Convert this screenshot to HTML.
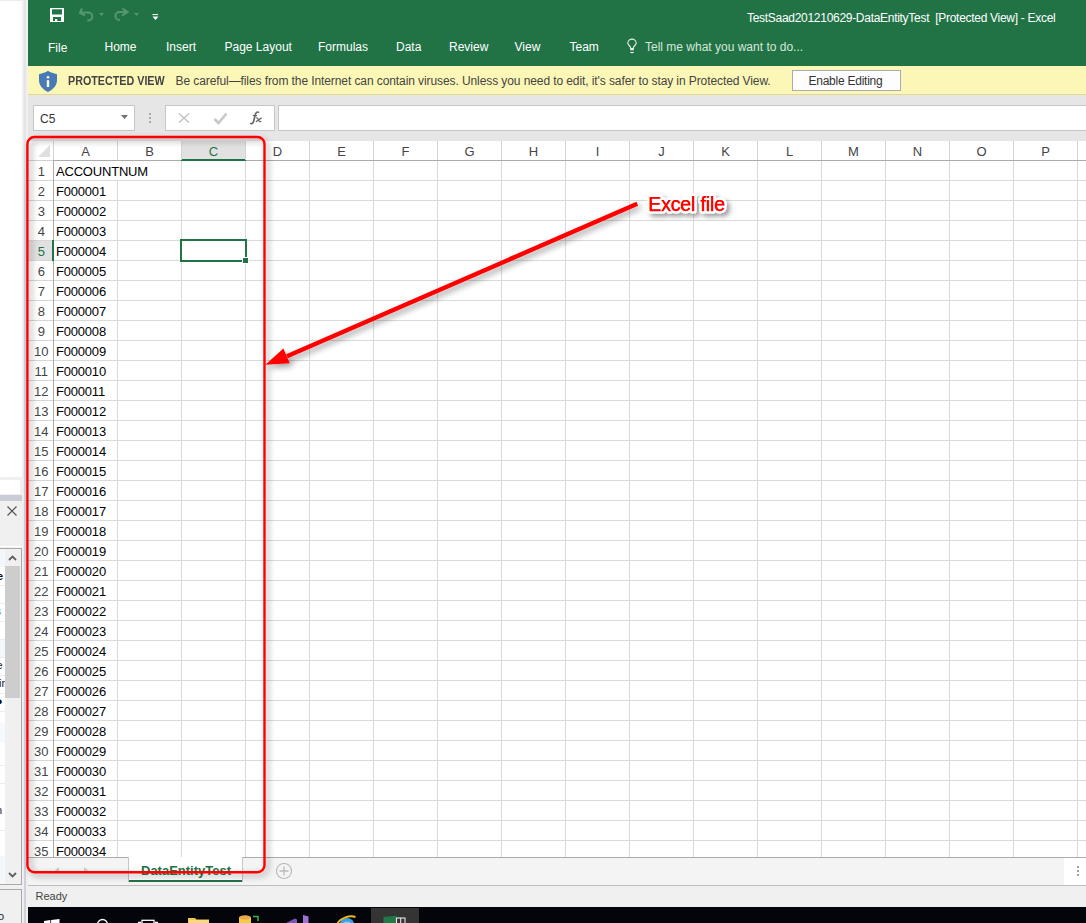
<!DOCTYPE html><html><head><meta charset="utf-8"><style>
*{margin:0;padding:0;box-sizing:border-box}
html,body{width:1086px;height:923px;overflow:hidden;background:#fff;font-family:"Liberation Sans",sans-serif;position:relative}
.ab{position:absolute}
.t{position:absolute;white-space:pre;line-height:1}
</style></head><body>
<div class="ab" style="left:0;top:0;width:22px;height:477px;background:#fff"></div>
<div class="ab" style="left:0;top:0;width:22px;height:1px;background:#ececec"></div>
<div class="ab" style="left:0;top:477px;width:22px;height:446px;background:#f0f0f0"></div>
<div class="ab" style="left:0;top:480px;width:20px;height:14px;background:#fff"></div>
<div class="ab" style="left:0;top:495px;width:22px;height:6px;background:#c9cbd7"></div>
<svg class="ab" style="left:6.5px;top:506px" width="10" height="10"><path d="M0.5 0.5l9 9M9.5 0.5l-9 9" stroke="#555" stroke-width="1.2"/></svg>
<div class="ab" style="left:0;top:546px;width:22px;height:1px;background:#fff"></div>
<div class="ab" style="left:0;top:548px;width:22px;height:337px;background:#fff;border:1px solid #a9a9a9;border-left:none"></div>
<div class="ab" style="left:0;top:549px;width:5px;height:18px;background:#f3f7fc"></div>
<div class="ab" style="left:0;top:639px;width:5px;height:18px;background:#f3f7fc"></div>
<div class="ab" style="left:0;top:723px;width:5px;height:20px;background:#f5f8fc"></div>
<div class="ab" style="left:0;top:856px;width:5px;height:28px;background:#f3f7fc"></div>
<div class="ab" style="left:0;top:585px;width:5px;height:1px;background:#e8ecf2"></div>
<div class="ab" style="left:0;top:603px;width:5px;height:1px;background:#e8ecf2"></div>
<div class="ab" style="left:0;top:621px;width:5px;height:1px;background:#e8ecf2"></div>
<div class="ab" style="left:0;top:639px;width:5px;height:1px;background:#e8ecf2"></div>
<div class="ab" style="left:0;top:657px;width:5px;height:1px;background:#e8ecf2"></div>
<div class="ab" style="left:0;top:675px;width:5px;height:1px;background:#e8ecf2"></div>
<div class="ab" style="left:0;top:693px;width:5px;height:1px;background:#e8ecf2"></div>
<div class="ab" style="left:0;top:711px;width:5px;height:1px;background:#e8ecf2"></div>
<div class="ab" style="left:0;top:765px;width:5px;height:1px;background:#e8ecf2"></div>
<div class="ab" style="left:0;top:783px;width:5px;height:1px;background:#e8ecf2"></div>
<div class="ab" style="left:0;top:830px;width:5px;height:1px;background:#e8ecf2"></div>
<div class="ab" style="left:5px;top:549px;width:16px;height:335px;background:#f0f0f0"></div>
<div class="ab" style="left:5px;top:566px;width:15px;height:132px;background:#cdcdcd"></div>
<svg class="ab" style="left:8px;top:555px" width="9" height="6"><path d="M1 5l3.5-3.5L8 5" fill="none" stroke="#606060" stroke-width="1.8"/></svg>
<svg class="ab" style="left:8px;top:872px" width="9" height="6"><path d="M1 1l3.5 3.5L8 1" fill="none" stroke="#606060" stroke-width="1.8"/></svg>
<div class="ab" style="left:0;top:549px;width:5px;height:335px;overflow:hidden"><div class="t" style="left:-3px;top:21.5px;font-size:11px;font-weight:700;color:#111">e</div><div class="t" style="left:-4.5px;top:57px;font-size:11px;color:#1e88d8">s</div><div class="t" style="left:-3.5px;top:111px;font-size:11px;color:#222">e</div><div class="t" style="left:-1px;top:128.5px;font-size:11px;color:#222">ir</div><div class="t" style="left:-4px;top:147px;font-size:11px;color:#000">●</div><div class="t" style="left:-4px;top:256px;font-size:11px;color:#222">n</div></div>
<div class="ab" style="left:0;top:889px;width:22px;height:34px;background:#f0f0f0;border-top:1px solid #a9a9a9;border-right:1px solid #a9a9a9"></div>
<div class="ab" style="left:0;top:890px;width:5px;height:33px;overflow:hidden"><div class="t" style="left:-2px;top:20.5px;font-size:11px;color:#223">o</div></div>
<div class="ab" style="left:22px;top:0;width:6px;height:923px;background:#efeff0"></div>
<div class="ab" style="left:24px;top:0;width:2px;height:923px;background:linear-gradient(#e4e5ea 0,#e4e5ea 140px,#cdd3de 200px,#cdd3de 100%)"></div>
<div class="ab" style="left:28px;top:0;width:1058px;height:66px;background:#217346"></div>
<svg class="ab" style="left:50px;top:8px" width="14" height="14" viewBox="0 0 14 14">
<rect x="0" y="0" width="14" height="14" rx="0.5" fill="#fff"/>
<rect x="2" y="1.3" width="10" height="5.2" fill="#217346"/>
<rect x="3" y="9" width="8" height="4" fill="#217346"/>
<rect x="5" y="11" width="2.2" height="2" fill="#fff"/>
</svg>
<svg class="ab" style="left:75px;top:4px" width="20" height="20" viewBox="0 0 20 20">
<path d="M7 4.5L5 9L10 11.3" fill="none" stroke="#569670" stroke-width="2"/>
<path d="M6 8.5H13.3A4 4 0 0 1 13.3 16.5H12.3" fill="none" stroke="#569670" stroke-width="2"/>
</svg>
<svg class="ab" style="left:99px;top:13px" width="5" height="3"><path d="M0 0h5l-2.5 3z" fill="#569670"/></svg>
<svg class="ab" style="left:108px;top:4px" width="22" height="20" viewBox="0 0 22 20">
<path d="M14.4 4.5L19.6 8L13.9 11.7" fill="none" stroke="#569670" stroke-width="2"/>
<path d="M19 8H11.4A4 4 0 0 0 11.4 16H12" fill="none" stroke="#569670" stroke-width="2"/>
</svg>
<svg class="ab" style="left:134px;top:13px" width="5" height="3"><path d="M0 0h5l-2.5 3z" fill="#569670"/></svg>
<svg class="ab" style="left:152px;top:13px" width="7" height="8"><rect x="0.5" y="1" width="5.5" height="1.1" fill="#fff"/><path d="M0.5 3.5h6l-3 3.5z" fill="#fff"/></svg>
<div class="t" style="left:747px;top:12px;font-size:12px;color:#fff;letter-spacing:-0.29px">TestSaad201210629-DataEntityTest  [Protected View] - Excel</div>
<div class="t" style="left:48px;top:42px;font-size:12px;color:#fff">File</div>
<div class="t" style="left:104.5px;top:41px;font-size:12px;color:#fff">Home</div>
<div class="t" style="left:166px;top:41px;font-size:12px;color:#fff">Insert</div>
<div class="t" style="left:224.5px;top:41px;font-size:12px;color:#fff">Page Layout</div>
<div class="t" style="left:318px;top:41px;font-size:12px;color:#fff">Formulas</div>
<div class="t" style="left:396px;top:41px;font-size:12px;color:#fff">Data</div>
<div class="t" style="left:449px;top:41px;font-size:12px;color:#fff">Review</div>
<div class="t" style="left:514.5px;top:41px;font-size:12px;color:#fff">View</div>
<div class="t" style="left:569.5px;top:41px;font-size:12px;color:#fff">Team</div>
<svg class="ab" style="left:626px;top:38px" width="12" height="16" viewBox="0 0 12 16">
<path d="M4.6 10.5V9.6C4.6 8.3 1.8 7 1.8 5.3A4.2 4.2 0 0 1 10.2 5.3C10.2 7 7.4 8.3 7.4 9.6V10.5z" fill="none" stroke="#e6efe8" stroke-width="1.1"/>
<rect x="4.2" y="11" width="3.6" height="1.3" fill="#e6efe8"/>
<path d="M4.2 14.5h3.6" stroke="#e6efe8" stroke-width="1.1"/>
</svg>
<div class="t" style="left:645px;top:41px;font-size:12px;color:#d6e6db">Tell me what you want to do...</div>
<div class="ab" style="left:28px;top:66px;width:1058px;height:29px;background:#fcf7b6"></div>
<div class="ab" style="left:28px;top:94px;width:1058px;height:1px;background:#e0d98e"></div>
<svg class="ab" style="left:38px;top:70px" width="20" height="23" viewBox="0 0 20 23">
<path d="M10 0.8C7.5 2.5 4.5 3.5 1 4.2v6C1 15.5 5 19.5 10 22 15 19.5 19 15.5 19 10.2V4.2C15.5 3.5 12.5 2.5 10 0.8z" fill="#4a7ab4"/>
<rect x="8.8" y="6.2" width="2.4" height="2.2" fill="#fff"/><rect x="8.8" y="10.2" width="2.4" height="6.8" fill="#fff"/>
</svg>
<div class="t" style="left:68px;top:74.6px;font-size:12px;color:#444;font-weight:700;transform:scaleX(0.895);transform-origin:0 0">PROTECTED VIEW</div>
<div class="t" style="left:175.5px;top:74.6px;font-size:12px;color:#444;letter-spacing:-0.09px">Be careful—files from the Internet can contain viruses. Unless you need to edit, it's safer to stay in Protected View.</div>
<div class="ab" style="left:792px;top:70px;width:109px;height:21px;background:#fdfdfd;border:1px solid #ababab"></div>
<div class="t" style="left:808.5px;top:74.6px;font-size:12px;color:#333;letter-spacing:-0.25px">Enable Editing</div>
<div class="ab" style="left:28px;top:95px;width:1058px;height:46px;background:#e6e6e6"></div>
<div class="ab" style="left:33px;top:105px;width:102px;height:26px;background:#fff;border:1px solid #c6c6c6"></div>
<div class="t" style="left:40px;top:112.6px;font-size:12px;color:#333">C5</div>
<svg class="ab" style="left:121px;top:115px" width="7" height="4"><path d="M0 0h7l-3.5 4z" fill="#707070"/></svg>
<div class="ab" style="left:149px;top:113px;width:2px;height:2px;background:#aaa"></div>
<div class="ab" style="left:149px;top:117px;width:2px;height:2px;background:#aaa"></div>
<div class="ab" style="left:149px;top:121px;width:2px;height:2px;background:#aaa"></div>
<div class="ab" style="left:165px;top:105px;width:110px;height:26px;background:#fff;border:1px solid #c6c6c6"></div>
<svg class="ab" style="left:178px;top:113px" width="12" height="10"><path d="M1 0.5l10 9M11 0.5l-10 9" stroke="#c4c4c4" stroke-width="1.5"/></svg>
<svg class="ab" style="left:213px;top:112px" width="15" height="13"><path d="M1.5 7l4 4L13.5 1.5" fill="none" stroke="#c8c8c8" stroke-width="2.6"/></svg>
<svg class="ab" style="left:248px;top:110px" width="16" height="16"><path d="M2.2 13.2C3.5 14.3 5 13.5 5.6 11.2L7.5 4C8 2.2 9.5 1.4 11 2.6" fill="none" stroke="#6a6a6a" stroke-width="1.7"/><path d="M4.8 5.6H9" stroke="#6a6a6a" stroke-width="1.3"/><path d="M8.2 8.2C9 7.6 9.6 8 10 9L11 10.8C11.4 11.8 12.3 12 13.2 11.3M13.5 7.9L8 11.8" fill="none" stroke="#6a6a6a" stroke-width="1.3"/></svg>
<div class="ab" style="left:278px;top:105px;width:820px;height:26px;background:#fff;border:1px solid #c6c6c6"></div>
<div class="ab" style="left:28px;top:141px;width:1058px;height:716px;background:#fff"></div>
<div class="ab" style="left:28px;top:160px;width:25px;height:1px;background:#d0d0d0"></div>
<div class="ab" style="left:53px;top:160px;width:1033px;height:1px;background:#ababab"></div>
<div class="ab" style="left:182px;top:141px;width:63px;height:19px;background:#e1e1e1"></div>
<div class="ab" style="left:181px;top:159px;width:65px;height:2px;background:#217346"></div>
<div class="ab" style="left:28px;top:241px;width:25px;height:19px;background:#e1e1e1"></div>
<div class="ab" style="left:28px;top:180px;width:25px;height:1px;background:#d6d6d6"></div>
<div class="ab" style="left:53px;top:180px;width:1033px;height:1px;background:#dadada"></div>
<div class="ab" style="left:28px;top:200px;width:25px;height:1px;background:#d6d6d6"></div>
<div class="ab" style="left:53px;top:200px;width:1033px;height:1px;background:#dadada"></div>
<div class="ab" style="left:28px;top:220px;width:25px;height:1px;background:#d6d6d6"></div>
<div class="ab" style="left:53px;top:220px;width:1033px;height:1px;background:#dadada"></div>
<div class="ab" style="left:28px;top:240px;width:25px;height:1px;background:#d6d6d6"></div>
<div class="ab" style="left:53px;top:240px;width:1033px;height:1px;background:#dadada"></div>
<div class="ab" style="left:28px;top:260px;width:25px;height:1px;background:#d6d6d6"></div>
<div class="ab" style="left:53px;top:260px;width:1033px;height:1px;background:#dadada"></div>
<div class="ab" style="left:28px;top:280px;width:25px;height:1px;background:#d6d6d6"></div>
<div class="ab" style="left:53px;top:280px;width:1033px;height:1px;background:#dadada"></div>
<div class="ab" style="left:28px;top:300px;width:25px;height:1px;background:#d6d6d6"></div>
<div class="ab" style="left:53px;top:300px;width:1033px;height:1px;background:#dadada"></div>
<div class="ab" style="left:28px;top:320px;width:25px;height:1px;background:#d6d6d6"></div>
<div class="ab" style="left:53px;top:320px;width:1033px;height:1px;background:#dadada"></div>
<div class="ab" style="left:28px;top:340px;width:25px;height:1px;background:#d6d6d6"></div>
<div class="ab" style="left:53px;top:340px;width:1033px;height:1px;background:#dadada"></div>
<div class="ab" style="left:28px;top:360px;width:25px;height:1px;background:#d6d6d6"></div>
<div class="ab" style="left:53px;top:360px;width:1033px;height:1px;background:#dadada"></div>
<div class="ab" style="left:28px;top:380px;width:25px;height:1px;background:#d6d6d6"></div>
<div class="ab" style="left:53px;top:380px;width:1033px;height:1px;background:#dadada"></div>
<div class="ab" style="left:28px;top:400px;width:25px;height:1px;background:#d6d6d6"></div>
<div class="ab" style="left:53px;top:400px;width:1033px;height:1px;background:#dadada"></div>
<div class="ab" style="left:28px;top:420px;width:25px;height:1px;background:#d6d6d6"></div>
<div class="ab" style="left:53px;top:420px;width:1033px;height:1px;background:#dadada"></div>
<div class="ab" style="left:28px;top:440px;width:25px;height:1px;background:#d6d6d6"></div>
<div class="ab" style="left:53px;top:440px;width:1033px;height:1px;background:#dadada"></div>
<div class="ab" style="left:28px;top:460px;width:25px;height:1px;background:#d6d6d6"></div>
<div class="ab" style="left:53px;top:460px;width:1033px;height:1px;background:#dadada"></div>
<div class="ab" style="left:28px;top:480px;width:25px;height:1px;background:#d6d6d6"></div>
<div class="ab" style="left:53px;top:480px;width:1033px;height:1px;background:#dadada"></div>
<div class="ab" style="left:28px;top:500px;width:25px;height:1px;background:#d6d6d6"></div>
<div class="ab" style="left:53px;top:500px;width:1033px;height:1px;background:#dadada"></div>
<div class="ab" style="left:28px;top:520px;width:25px;height:1px;background:#d6d6d6"></div>
<div class="ab" style="left:53px;top:520px;width:1033px;height:1px;background:#dadada"></div>
<div class="ab" style="left:28px;top:540px;width:25px;height:1px;background:#d6d6d6"></div>
<div class="ab" style="left:53px;top:540px;width:1033px;height:1px;background:#dadada"></div>
<div class="ab" style="left:28px;top:560px;width:25px;height:1px;background:#d6d6d6"></div>
<div class="ab" style="left:53px;top:560px;width:1033px;height:1px;background:#dadada"></div>
<div class="ab" style="left:28px;top:580px;width:25px;height:1px;background:#d6d6d6"></div>
<div class="ab" style="left:53px;top:580px;width:1033px;height:1px;background:#dadada"></div>
<div class="ab" style="left:28px;top:600px;width:25px;height:1px;background:#d6d6d6"></div>
<div class="ab" style="left:53px;top:600px;width:1033px;height:1px;background:#dadada"></div>
<div class="ab" style="left:28px;top:620px;width:25px;height:1px;background:#d6d6d6"></div>
<div class="ab" style="left:53px;top:620px;width:1033px;height:1px;background:#dadada"></div>
<div class="ab" style="left:28px;top:640px;width:25px;height:1px;background:#d6d6d6"></div>
<div class="ab" style="left:53px;top:640px;width:1033px;height:1px;background:#dadada"></div>
<div class="ab" style="left:28px;top:660px;width:25px;height:1px;background:#d6d6d6"></div>
<div class="ab" style="left:53px;top:660px;width:1033px;height:1px;background:#dadada"></div>
<div class="ab" style="left:28px;top:680px;width:25px;height:1px;background:#d6d6d6"></div>
<div class="ab" style="left:53px;top:680px;width:1033px;height:1px;background:#dadada"></div>
<div class="ab" style="left:28px;top:700px;width:25px;height:1px;background:#d6d6d6"></div>
<div class="ab" style="left:53px;top:700px;width:1033px;height:1px;background:#dadada"></div>
<div class="ab" style="left:28px;top:720px;width:25px;height:1px;background:#d6d6d6"></div>
<div class="ab" style="left:53px;top:720px;width:1033px;height:1px;background:#dadada"></div>
<div class="ab" style="left:28px;top:740px;width:25px;height:1px;background:#d6d6d6"></div>
<div class="ab" style="left:53px;top:740px;width:1033px;height:1px;background:#dadada"></div>
<div class="ab" style="left:28px;top:760px;width:25px;height:1px;background:#d6d6d6"></div>
<div class="ab" style="left:53px;top:760px;width:1033px;height:1px;background:#dadada"></div>
<div class="ab" style="left:28px;top:780px;width:25px;height:1px;background:#d6d6d6"></div>
<div class="ab" style="left:53px;top:780px;width:1033px;height:1px;background:#dadada"></div>
<div class="ab" style="left:28px;top:800px;width:25px;height:1px;background:#d6d6d6"></div>
<div class="ab" style="left:53px;top:800px;width:1033px;height:1px;background:#dadada"></div>
<div class="ab" style="left:28px;top:820px;width:25px;height:1px;background:#d6d6d6"></div>
<div class="ab" style="left:53px;top:820px;width:1033px;height:1px;background:#dadada"></div>
<div class="ab" style="left:28px;top:840px;width:25px;height:1px;background:#d6d6d6"></div>
<div class="ab" style="left:53px;top:840px;width:1033px;height:1px;background:#dadada"></div>
<div class="ab" style="left:53px;top:141px;width:1px;height:19px;background:#d4d4d4"></div>
<div class="ab" style="left:53px;top:160px;width:1px;height:697px;background:#ababab"></div>
<div class="ab" style="left:52px;top:240px;width:2px;height:21px;background:#217346"></div>
<div class="ab" style="left:117px;top:141px;width:1px;height:19px;background:#d4d4d4"></div>
<div class="ab" style="left:117px;top:181px;width:1px;height:676px;background:#dadada"></div>
<div class="ab" style="left:181px;top:141px;width:1px;height:19px;background:#d4d4d4"></div>
<div class="ab" style="left:181px;top:161px;width:1px;height:696px;background:#dadada"></div>
<div class="ab" style="left:245px;top:141px;width:1px;height:19px;background:#d4d4d4"></div>
<div class="ab" style="left:245px;top:161px;width:1px;height:696px;background:#dadada"></div>
<div class="ab" style="left:309px;top:141px;width:1px;height:19px;background:#d4d4d4"></div>
<div class="ab" style="left:309px;top:161px;width:1px;height:696px;background:#dadada"></div>
<div class="ab" style="left:373px;top:141px;width:1px;height:19px;background:#d4d4d4"></div>
<div class="ab" style="left:373px;top:161px;width:1px;height:696px;background:#dadada"></div>
<div class="ab" style="left:437px;top:141px;width:1px;height:19px;background:#d4d4d4"></div>
<div class="ab" style="left:437px;top:161px;width:1px;height:696px;background:#dadada"></div>
<div class="ab" style="left:501px;top:141px;width:1px;height:19px;background:#d4d4d4"></div>
<div class="ab" style="left:501px;top:161px;width:1px;height:696px;background:#dadada"></div>
<div class="ab" style="left:565px;top:141px;width:1px;height:19px;background:#d4d4d4"></div>
<div class="ab" style="left:565px;top:161px;width:1px;height:696px;background:#dadada"></div>
<div class="ab" style="left:629px;top:141px;width:1px;height:19px;background:#d4d4d4"></div>
<div class="ab" style="left:629px;top:161px;width:1px;height:696px;background:#dadada"></div>
<div class="ab" style="left:693px;top:141px;width:1px;height:19px;background:#d4d4d4"></div>
<div class="ab" style="left:693px;top:161px;width:1px;height:696px;background:#dadada"></div>
<div class="ab" style="left:757px;top:141px;width:1px;height:19px;background:#d4d4d4"></div>
<div class="ab" style="left:757px;top:161px;width:1px;height:696px;background:#dadada"></div>
<div class="ab" style="left:821px;top:141px;width:1px;height:19px;background:#d4d4d4"></div>
<div class="ab" style="left:821px;top:161px;width:1px;height:696px;background:#dadada"></div>
<div class="ab" style="left:885px;top:141px;width:1px;height:19px;background:#d4d4d4"></div>
<div class="ab" style="left:885px;top:161px;width:1px;height:696px;background:#dadada"></div>
<div class="ab" style="left:949px;top:141px;width:1px;height:19px;background:#d4d4d4"></div>
<div class="ab" style="left:949px;top:161px;width:1px;height:696px;background:#dadada"></div>
<div class="ab" style="left:1013px;top:141px;width:1px;height:19px;background:#d4d4d4"></div>
<div class="ab" style="left:1013px;top:161px;width:1px;height:696px;background:#dadada"></div>
<div class="ab" style="left:1077px;top:141px;width:1px;height:19px;background:#d4d4d4"></div>
<div class="ab" style="left:1077px;top:161px;width:1px;height:696px;background:#dadada"></div>
<div class="t" style="left:53.5px;top:145px;width:64px;text-align:center;font-size:13px;color:#444">A</div>
<div class="t" style="left:117.5px;top:145px;width:64px;text-align:center;font-size:13px;color:#444">B</div>
<div class="t" style="left:181.5px;top:145px;width:64px;text-align:center;font-size:13px;color:#217346">C</div>
<div class="t" style="left:245.5px;top:145px;width:64px;text-align:center;font-size:13px;color:#444">D</div>
<div class="t" style="left:309.5px;top:145px;width:64px;text-align:center;font-size:13px;color:#444">E</div>
<div class="t" style="left:373.5px;top:145px;width:64px;text-align:center;font-size:13px;color:#444">F</div>
<div class="t" style="left:437.5px;top:145px;width:64px;text-align:center;font-size:13px;color:#444">G</div>
<div class="t" style="left:501.5px;top:145px;width:64px;text-align:center;font-size:13px;color:#444">H</div>
<div class="t" style="left:565.5px;top:145px;width:64px;text-align:center;font-size:13px;color:#444">I</div>
<div class="t" style="left:629.5px;top:145px;width:64px;text-align:center;font-size:13px;color:#444">J</div>
<div class="t" style="left:693.5px;top:145px;width:64px;text-align:center;font-size:13px;color:#444">K</div>
<div class="t" style="left:757.5px;top:145px;width:64px;text-align:center;font-size:13px;color:#444">L</div>
<div class="t" style="left:821.5px;top:145px;width:64px;text-align:center;font-size:13px;color:#444">M</div>
<div class="t" style="left:885.5px;top:145px;width:64px;text-align:center;font-size:13px;color:#444">N</div>
<div class="t" style="left:949.5px;top:145px;width:64px;text-align:center;font-size:13px;color:#444">O</div>
<div class="t" style="left:1013.5px;top:145px;width:64px;text-align:center;font-size:13px;color:#444">P</div>
<svg class="ab" style="left:38px;top:145px" width="12" height="12"><path d="M12 0v12H0z" fill="#dfdfdf"/></svg>
<div class="t" style="left:28.8px;top:165px;width:25px;text-align:center;font-size:13px;color:#444">1</div>
<div class="t" style="left:56px;top:165px;font-size:13px;color:#000;letter-spacing:-0.2px">ACCOUNTNUM</div>
<div class="t" style="left:28.8px;top:185px;width:25px;text-align:center;font-size:13px;color:#444">2</div>
<div class="t" style="left:56px;top:185px;font-size:13px;color:#000;letter-spacing:-0.2px">F000001</div>
<div class="t" style="left:28.8px;top:205px;width:25px;text-align:center;font-size:13px;color:#444">3</div>
<div class="t" style="left:56px;top:205px;font-size:13px;color:#000;letter-spacing:-0.2px">F000002</div>
<div class="t" style="left:28.8px;top:225px;width:25px;text-align:center;font-size:13px;color:#444">4</div>
<div class="t" style="left:56px;top:225px;font-size:13px;color:#000;letter-spacing:-0.2px">F000003</div>
<div class="t" style="left:28.8px;top:245px;width:25px;text-align:center;font-size:13px;color:#217346">5</div>
<div class="t" style="left:56px;top:245px;font-size:13px;color:#000;letter-spacing:-0.2px">F000004</div>
<div class="t" style="left:28.8px;top:265px;width:25px;text-align:center;font-size:13px;color:#444">6</div>
<div class="t" style="left:56px;top:265px;font-size:13px;color:#000;letter-spacing:-0.2px">F000005</div>
<div class="t" style="left:28.8px;top:285px;width:25px;text-align:center;font-size:13px;color:#444">7</div>
<div class="t" style="left:56px;top:285px;font-size:13px;color:#000;letter-spacing:-0.2px">F000006</div>
<div class="t" style="left:28.8px;top:305px;width:25px;text-align:center;font-size:13px;color:#444">8</div>
<div class="t" style="left:56px;top:305px;font-size:13px;color:#000;letter-spacing:-0.2px">F000007</div>
<div class="t" style="left:28.8px;top:325px;width:25px;text-align:center;font-size:13px;color:#444">9</div>
<div class="t" style="left:56px;top:325px;font-size:13px;color:#000;letter-spacing:-0.2px">F000008</div>
<div class="t" style="left:28.8px;top:345px;width:25px;text-align:center;font-size:13px;color:#444">10</div>
<div class="t" style="left:56px;top:345px;font-size:13px;color:#000;letter-spacing:-0.2px">F000009</div>
<div class="t" style="left:28.8px;top:365px;width:25px;text-align:center;font-size:13px;color:#444">11</div>
<div class="t" style="left:56px;top:365px;font-size:13px;color:#000;letter-spacing:-0.2px">F000010</div>
<div class="t" style="left:28.8px;top:385px;width:25px;text-align:center;font-size:13px;color:#444">12</div>
<div class="t" style="left:56px;top:385px;font-size:13px;color:#000;letter-spacing:-0.2px">F000011</div>
<div class="t" style="left:28.8px;top:405px;width:25px;text-align:center;font-size:13px;color:#444">13</div>
<div class="t" style="left:56px;top:405px;font-size:13px;color:#000;letter-spacing:-0.2px">F000012</div>
<div class="t" style="left:28.8px;top:425px;width:25px;text-align:center;font-size:13px;color:#444">14</div>
<div class="t" style="left:56px;top:425px;font-size:13px;color:#000;letter-spacing:-0.2px">F000013</div>
<div class="t" style="left:28.8px;top:445px;width:25px;text-align:center;font-size:13px;color:#444">15</div>
<div class="t" style="left:56px;top:445px;font-size:13px;color:#000;letter-spacing:-0.2px">F000014</div>
<div class="t" style="left:28.8px;top:465px;width:25px;text-align:center;font-size:13px;color:#444">16</div>
<div class="t" style="left:56px;top:465px;font-size:13px;color:#000;letter-spacing:-0.2px">F000015</div>
<div class="t" style="left:28.8px;top:485px;width:25px;text-align:center;font-size:13px;color:#444">17</div>
<div class="t" style="left:56px;top:485px;font-size:13px;color:#000;letter-spacing:-0.2px">F000016</div>
<div class="t" style="left:28.8px;top:505px;width:25px;text-align:center;font-size:13px;color:#444">18</div>
<div class="t" style="left:56px;top:505px;font-size:13px;color:#000;letter-spacing:-0.2px">F000017</div>
<div class="t" style="left:28.8px;top:525px;width:25px;text-align:center;font-size:13px;color:#444">19</div>
<div class="t" style="left:56px;top:525px;font-size:13px;color:#000;letter-spacing:-0.2px">F000018</div>
<div class="t" style="left:28.8px;top:545px;width:25px;text-align:center;font-size:13px;color:#444">20</div>
<div class="t" style="left:56px;top:545px;font-size:13px;color:#000;letter-spacing:-0.2px">F000019</div>
<div class="t" style="left:28.8px;top:565px;width:25px;text-align:center;font-size:13px;color:#444">21</div>
<div class="t" style="left:56px;top:565px;font-size:13px;color:#000;letter-spacing:-0.2px">F000020</div>
<div class="t" style="left:28.8px;top:585px;width:25px;text-align:center;font-size:13px;color:#444">22</div>
<div class="t" style="left:56px;top:585px;font-size:13px;color:#000;letter-spacing:-0.2px">F000021</div>
<div class="t" style="left:28.8px;top:605px;width:25px;text-align:center;font-size:13px;color:#444">23</div>
<div class="t" style="left:56px;top:605px;font-size:13px;color:#000;letter-spacing:-0.2px">F000022</div>
<div class="t" style="left:28.8px;top:625px;width:25px;text-align:center;font-size:13px;color:#444">24</div>
<div class="t" style="left:56px;top:625px;font-size:13px;color:#000;letter-spacing:-0.2px">F000023</div>
<div class="t" style="left:28.8px;top:645px;width:25px;text-align:center;font-size:13px;color:#444">25</div>
<div class="t" style="left:56px;top:645px;font-size:13px;color:#000;letter-spacing:-0.2px">F000024</div>
<div class="t" style="left:28.8px;top:665px;width:25px;text-align:center;font-size:13px;color:#444">26</div>
<div class="t" style="left:56px;top:665px;font-size:13px;color:#000;letter-spacing:-0.2px">F000025</div>
<div class="t" style="left:28.8px;top:685px;width:25px;text-align:center;font-size:13px;color:#444">27</div>
<div class="t" style="left:56px;top:685px;font-size:13px;color:#000;letter-spacing:-0.2px">F000026</div>
<div class="t" style="left:28.8px;top:705px;width:25px;text-align:center;font-size:13px;color:#444">28</div>
<div class="t" style="left:56px;top:705px;font-size:13px;color:#000;letter-spacing:-0.2px">F000027</div>
<div class="t" style="left:28.8px;top:725px;width:25px;text-align:center;font-size:13px;color:#444">29</div>
<div class="t" style="left:56px;top:725px;font-size:13px;color:#000;letter-spacing:-0.2px">F000028</div>
<div class="t" style="left:28.8px;top:745px;width:25px;text-align:center;font-size:13px;color:#444">30</div>
<div class="t" style="left:56px;top:745px;font-size:13px;color:#000;letter-spacing:-0.2px">F000029</div>
<div class="t" style="left:28.8px;top:765px;width:25px;text-align:center;font-size:13px;color:#444">31</div>
<div class="t" style="left:56px;top:765px;font-size:13px;color:#000;letter-spacing:-0.2px">F000030</div>
<div class="t" style="left:28.8px;top:785px;width:25px;text-align:center;font-size:13px;color:#444">32</div>
<div class="t" style="left:56px;top:785px;font-size:13px;color:#000;letter-spacing:-0.2px">F000031</div>
<div class="t" style="left:28.8px;top:805px;width:25px;text-align:center;font-size:13px;color:#444">33</div>
<div class="t" style="left:56px;top:805px;font-size:13px;color:#000;letter-spacing:-0.2px">F000032</div>
<div class="t" style="left:28.8px;top:825px;width:25px;text-align:center;font-size:13px;color:#444">34</div>
<div class="t" style="left:56px;top:825px;font-size:13px;color:#000;letter-spacing:-0.2px">F000033</div>
<div class="t" style="left:28.8px;top:845px;width:25px;text-align:center;font-size:13px;color:#444">35</div>
<div class="t" style="left:56px;top:845px;font-size:13px;color:#000;letter-spacing:-0.2px">F000034</div>
<div class="ab" style="left:180px;top:239px;width:67px;height:23px;border:2px solid #217346"></div>
<div class="ab" style="left:242px;top:257px;width:7px;height:7px;background:#217346;border:1px solid #fff"></div>
<div class="ab" style="left:28px;top:857px;width:1058px;height:28px;background:#f4f4f4"></div>
<div class="ab" style="left:28px;top:857px;width:1058px;height:1px;background:#ababab"></div>
<div class="ab" style="left:28px;top:885px;width:1058px;height:1px;background:#bdbdbd"></div>
<svg class="ab" style="left:55px;top:867px" width="4" height="7"><path d="M4 0v7L0 3.5z" fill="#c8c8c8"/></svg>
<svg class="ab" style="left:84px;top:867px" width="4" height="7"><path d="M0 0v7l4-3.5z" fill="#c8c8c8"/></svg>
<div class="ab" style="left:128px;top:857px;width:115px;height:25px;background:#fff;border-left:1px solid #c6c6c6;border-right:1px solid #c6c6c6"></div>
<div class="ab" style="left:129px;top:880px;width:113px;height:2px;background:#217346"></div>
<div class="t" style="left:141px;top:863.5px;font-size:13px;font-weight:700;color:#217346">DataEntityTest</div>
<svg class="ab" style="left:275px;top:863px" width="18" height="18"><circle cx="9" cy="8" r="7.5" fill="none" stroke="#bbb" stroke-width="1.2"/><path d="M9 3.5v9M4.5 8h9" stroke="#bbb" stroke-width="1.3"/></svg>
<div class="ab" style="left:1064px;top:858px;width:22px;height:27px;background:#fff"></div>
<div class="ab" style="left:1077px;top:866px;width:2px;height:2px;background:#a0a0a0"></div>
<div class="ab" style="left:1077px;top:870px;width:2px;height:2px;background:#a0a0a0"></div>
<div class="ab" style="left:1077px;top:874px;width:2px;height:2px;background:#a0a0a0"></div>
<div class="ab" style="left:28px;top:886px;width:1058px;height:21px;background:#f0f0f0"></div>
<div class="t" style="left:35.5px;top:890.7px;font-size:11px;color:#444">Ready</div>
<div class="ab" style="left:28px;top:907px;width:1058px;height:16px;background:#03050a"></div>
<div class="ab" style="left:371px;top:908px;width:48px;height:15px;background:#343434"></div>
<svg class="ab" style="left:43px;top:918px" width="17" height="5"><path d="M1 3L7.3 2.1V5H1z M8.1 2L16.5 0.9V5H8.1z" fill="#fff"/></svg>
<svg class="ab" style="left:96px;top:918px" width="13" height="5"><circle cx="6.5" cy="6.5" r="5" fill="none" stroke="#fff" stroke-width="1.3"/></svg>
<svg class="ab" style="left:137px;top:919px" width="22" height="4"><rect x="5" y="1.3" width="12" height="6" fill="none" stroke="#fff" stroke-width="1.3"/><path d="M1 3.5h3M18 3.5h3" stroke="#fff" stroke-width="1.3"/></svg>
<svg class="ab" style="left:188px;top:917px" width="22" height="6"><path d="M0 1h7l1.5 1.5H21V6H0z" fill="#f0c54e"/><rect x="1" y="3" width="20" height="3" fill="#f9d97a"/></svg>
<svg class="ab" style="left:238px;top:915px" width="22" height="8"><rect x="1" y="2" width="12" height="7" fill="#f4cc40"/><ellipse cx="7" cy="2.5" rx="6" ry="2.2" fill="#e9a94e"/><path d="M15 1.5h5V6" fill="none" stroke="#3bb54a" stroke-width="1.5"/></svg>
<svg class="ab" style="left:284px;top:913px" width="28" height="10"><path d="M2 10L11 5.5L13 6.5V10z" fill="#7a55b8"/><path d="M19 2L24.5 3.5V10H19z" fill="#9e72d6"/></svg>
<svg class="ab" style="left:336px;top:913px" width="22" height="10"><ellipse cx="11" cy="11" rx="7" ry="6" fill="#3aa0e8"/><ellipse cx="11" cy="11.5" rx="4" ry="3" fill="#8fd0f8"/><path d="M1.5 10C5 5 13 2 19.5 4" fill="none" stroke="#f0b820" stroke-width="2"/></svg>
<svg class="ab" style="left:383px;top:915px" width="24" height="8"><path d="M0.5 2L13.5 0.8V8H0.5z" fill="#1f7a45"/><rect x="13.5" y="3" width="8.5" height="6" fill="none" stroke="#e8e8e8" stroke-width="1.1"/><path d="M17.7 3v5" stroke="#e8e8e8" stroke-width="1.1"/></svg>
<svg class="ab" style="left:0;top:0" width="1086" height="923" viewBox="0 0 1086 923">
<defs><filter id="sh" x="-10%" y="-10%" width="130%" height="130%"><feGaussianBlur in="SourceAlpha" stdDeviation="3"/><feOffset dx="3" dy="3"/><feComponentTransfer><feFuncA type="linear" slope="0.38"/></feComponentTransfer><feMerge><feMergeNode/><feMergeNode in="SourceGraphic"/></feMerge></filter></defs>
<g filter="url(#sh)">
<rect x="27.4" y="137" width="237.1" height="735.2" rx="7" ry="7" fill="none" stroke="#f00" stroke-width="2.4"/>
<path d="M637.25 203.75L287 356.3" stroke="#f00" stroke-width="4.4" stroke-linecap="butt"/>
<path d="M265.3 364.8L283.4 348.6L289.8 363.3z" fill="#f00"/>
</g>
</svg>
<svg class="ab" style="left:620px;top:180px" width="130" height="50" viewBox="620 180 130 50">
<defs><filter id="sh2" x="-20%" y="-30%" width="140%" height="170%"><feGaussianBlur in="SourceAlpha" stdDeviation="2.5"/><feOffset dx="3" dy="3"/><feComponentTransfer><feFuncA type="linear" slope="0.4"/></feComponentTransfer><feMerge><feMergeNode/><feMergeNode in="SourceGraphic"/></feMerge></filter></defs>
<g filter="url(#sh2)"><text x="648.3" y="211" font-family="Liberation Sans" font-size="19.5" letter-spacing="-0.15" fill="#f00" stroke="#fff" stroke-width="5" stroke-linejoin="round" paint-order="stroke">Excel file</text></g><text x="648.3" y="211" font-family="Liberation Sans" font-size="19.5" letter-spacing="-0.15" fill="#f00" stroke="#f00" stroke-width="0.25">Excel file</text>
</svg>
</body></html>
